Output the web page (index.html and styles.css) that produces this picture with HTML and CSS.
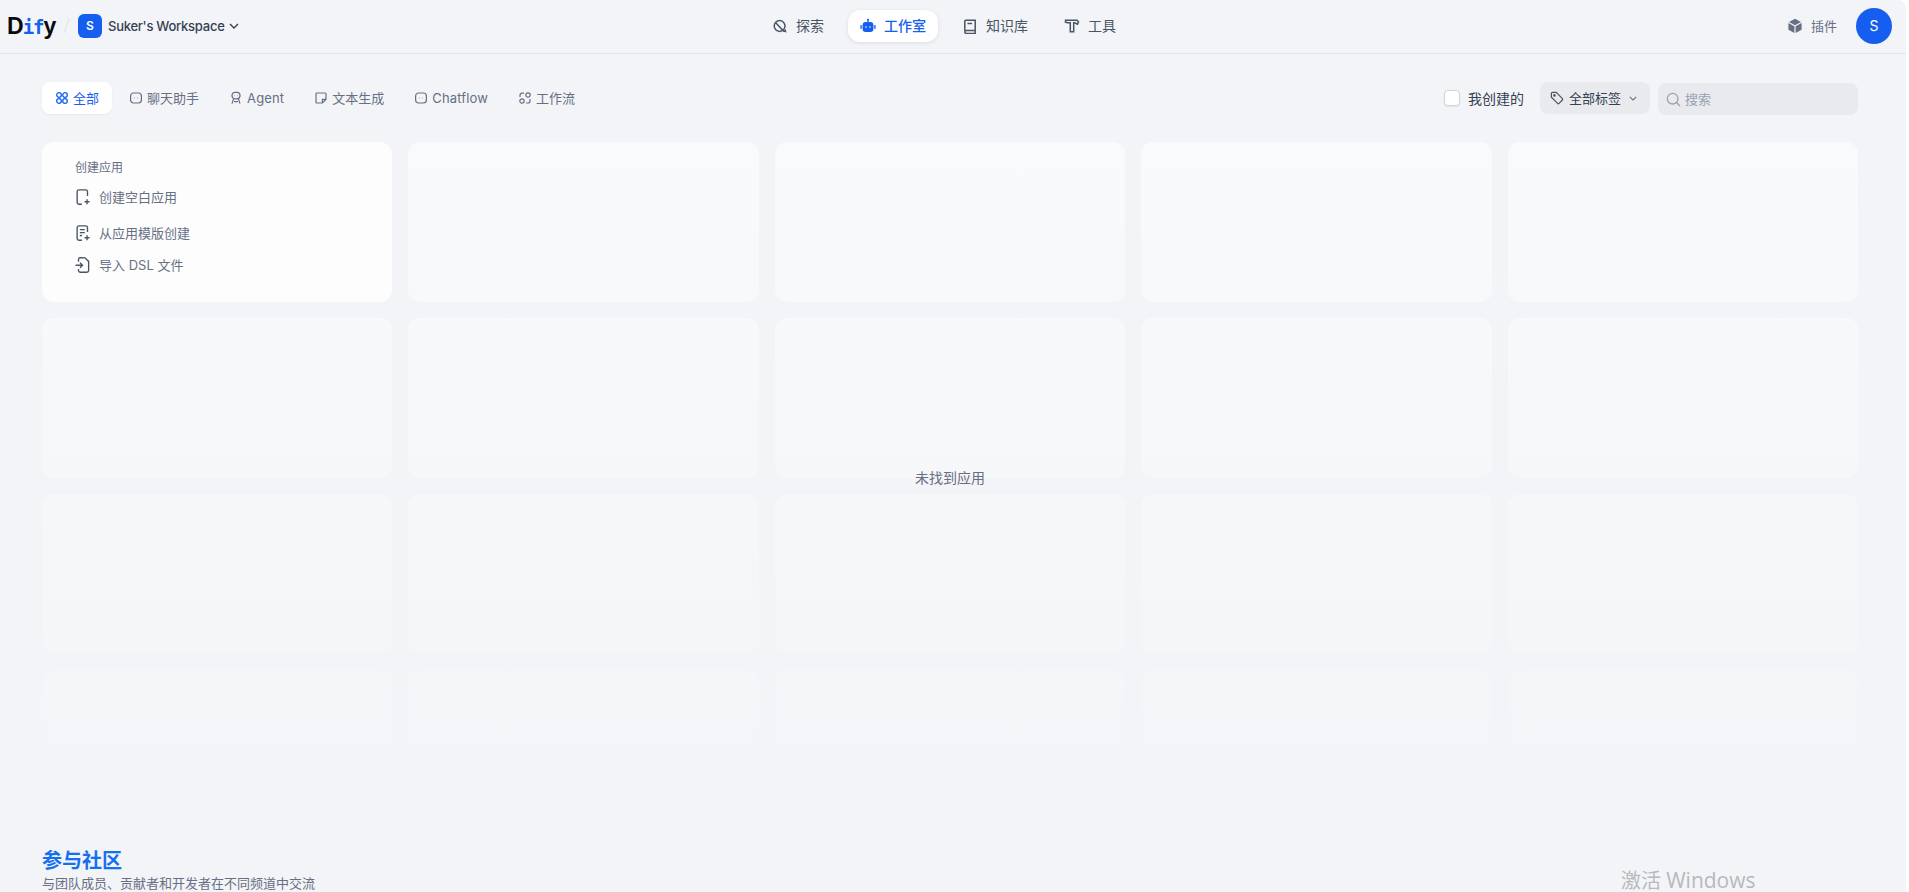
FILE: index.html
```html
<!DOCTYPE html>
<html lang="zh-CN">
<head>
    <meta charset="UTF-8">
    <meta name="viewport" content="width=device-width, initial-scale=1.0">
    <title>Dify</title>
    <link rel="stylesheet" href="styles.css">
</head>
<body>
<div class="window">

    <header class="topbar">
        <div class="topbar-left">
            <div class="logo">D<span class="logo-blue">if</span>y</div>
            <span class="slash"></span>
            <div class="ws-badge">S</div>
            <div class="ws-name">Suker's Workspace</div>
            <svg class="ws-chevron" viewBox="0 0 10 6" width="10" height="6"><path d="M1 1l4 4 4-4" fill="none" stroke="#354052" stroke-width="1.4"/></svg>
        </div>
        <nav class="mainnav">
            <a class="nav-item">
                <svg viewBox="0 0 16 16" width="16" height="16" fill="none" stroke="#495464" stroke-width="1.5"><circle cx="7.6" cy="8" r="5.4"/><path d="M3.5 4.5l8 8.5 2 .5-.5-2"/></svg>
                <span class="zh">探索</span>
            </a>
            <a class="nav-item active">
                <svg viewBox="0 0 16 16" width="16" height="16" fill="#155eef"><circle cx="8" cy="1.8" r="1.1"/><rect x="7.4" y="2" width="1.2" height="2.4"/><rect x="2.6" y="4" width="10.8" height="10" rx="3"/><rect x=".4" y="7" width="1.4" height="4" rx=".7"/><rect x="14.2" y="7" width="1.4" height="4" rx=".7"/><circle cx="6" cy="9" r=".8" fill="#fff"/><circle cx="10" cy="9" r=".8" fill="#fff"/></svg>
                <span class="zh">工作室</span>
            </a>
            <a class="nav-item">
                <svg viewBox="0 0 16 16" width="16" height="16" fill="none" stroke="#495464" stroke-width="1.5"><path d="M2.8 12.5V3.2c0-.6.5-1 1-1h9.400v10.300H4.300a1.500 1.500 0 0 0 0 3h8.900v-3"/><path d="M5.500 5.500h4.500"/></svg>
                <span class="zh">知识库</span>
            </a>
            <a class="nav-item">
                <svg viewBox="0 0 16 16" width="16" height="16" fill="none" stroke="#495464" stroke-width="1.5"><path d="M1.500 2.200h11.500l1.500 1.600-1 2.400-3-1.400H9.700v9H6.300v-9H3.500L1.500 4.200z"/></svg>
                <span class="zh">工具</span>
            </a>
        </nav>
        <div class="topbar-right">
            <a class="plugin-link">
                <svg viewBox="0 0 16 16" width="16" height="16" fill="#676f83"><path d="M8 .8l6 3.200L8 7.200 2 4z"/><path d="M1.400 5l6 3.200V15l-6-3.200z"/><path d="M14.600 5l-6 3.200V15l6-3.200z"/></svg>
                <span class="zh">插件</span>
            </a>
            <div class="avatar">S</div>
        </div>
    </header>

    <main class="content">
        <div class="toolbar">
            <div class="tabs">
                <a class="tab active">
                    <svg viewBox="0 0 14 14" width="14" height="14" fill="none" stroke="currentColor" stroke-width="1.3"><circle cx="4" cy="4" r="2.3"/><circle cx="10" cy="4" r="2.3"/><circle cx="4" cy="10" r="2.3"/><circle cx="10" cy="10" r="2.3"/></svg>
                    <span class="zh">全部</span>
                </a>
                <a class="tab">
                    <svg viewBox="0 0 14 14" width="14" height="14" fill="none" stroke="currentColor" stroke-width="1.2"><rect x="1.600" y="2" width="10.800" height="10" rx="3"/><path d="M5.200 7h.6M8.200 7h.6"/></svg>
                    <span class="zh">聊天助手</span>
                </a>
                <a class="tab">
                    <svg viewBox="0 0 14 14" width="14" height="14" fill="none" stroke="currentColor" stroke-width="1.2"><rect x="3" y="1.400" width="8" height="6.400" rx="3"/><path d="M5.600 4.600h.4M8 4.600h.4M4.600 7.800L3 12.600M9.400 7.800l1.600 4.800M5 10.600h4"/></svg>
                    <span class="tab-en">Agent</span>
                </a>
                <a class="tab">
                    <svg viewBox="0 0 14 14" width="14" height="14" fill="none" stroke="currentColor" stroke-width="1.2"><path d="M2 3c0-.6.4-1 1-1h8c.6 0 1 .4 1 1v5.400L8.400 12H3c-.6 0-1-.4-1-1z"/><path d="M12 8.400H8.400V12"/></svg>
                    <span class="zh">文本生成</span>
                </a>
                <a class="tab">
                    <svg viewBox="0 0 14 14" width="14" height="14" fill="none" stroke="currentColor" stroke-width="1.2"><rect x="1.600" y="2" width="10.800" height="10" rx="3"/><path d="M5.200 7h.6M8.200 7h.6"/></svg>
                    <span class="tab-en">Chatflow</span>
                </a>
                <a class="tab">
                    <svg viewBox="0 0 14 14" width="14" height="14" fill="none" stroke="currentColor" stroke-width="1.2"><path d="M6 2.200H4a2 2 0 0 0-2 2V6"/><circle cx="10" cy="4" r="2.200"/><circle cx="4" cy="10" r="2.200"/><path d="M8 12h2a2 2 0 0 0 2-2V8"/></svg>
                    <span class="zh">工作流</span>
                </a>
            </div>
            <div class="filters">
                <label class="mine"><span class="checkbox"></span>我创建的</label>
                <div class="tag-filter">
                    <svg viewBox="0 0 14 14" width="14" height="14" fill="none" stroke="#495464" stroke-width="1.2"><path d="M1.400 2.400c0-.6.4-1 1-1h3.800l6.200 6.200c.4.4.4 1 0 1.400l-3.400 3.400c-.4.4-1 .4-1.400 0L1.400 6.200z"/><circle cx="4.400" cy="4.400" r=".7"/></svg>
                    <span class="zh">全部标签</span>
                    <svg class="tag-chevron" viewBox="0 0 8 5" width="8" height="5"><path d="M.8.8L4 4 7.200.8" fill="none" stroke="#676f83" stroke-width="1.1"/></svg>
                </div>
                <div class="search">
                    <svg viewBox="0 0 14 14" width="15" height="15" fill="none" stroke="#98a2b2" stroke-width="1.2"><circle cx="6.200" cy="6.200" r="5"/><path d="M10 10l3 3"/></svg>
                    <span class="zh">搜索</span>
                </div>
            </div>
        </div>

        <div class="grid">
            <div class="card create-card">
                <div class="create-title">创建应用</div>
                <a class="create-row row-blank">
                    <svg viewBox="0 0 16 16" width="18" height="18" fill="none" stroke="#495464" stroke-width="1.2"><path d="M7 14.400H4.400c-1 0-1.600-.7-1.600-1.600V3.200c0-1 .7-1.600 1.600-1.600h6c1 0 1.600.7 1.600 1.600v4"/><path d="M11.600 10v4.400M9.400 12.200h4.400"/></svg>
                    <span class="zh">创建空白应用</span>
                </a>
                <a class="create-row row-template">
                    <svg viewBox="0 0 16 16" width="18" height="18" fill="none" stroke="#495464" stroke-width="1.2"><path d="M7 14.400H4.400c-1 0-1.600-.7-1.600-1.600V3.200c0-1 .7-1.600 1.600-1.600h6c1 0 1.600.7 1.600 1.600v4"/><path d="M5.200 5h4.400M5.200 7.600h4.400M5.200 10.200h2"/><path d="M11.600 10v4.400M9.400 12.200h4.400"/></svg>
                    <span class="zh">从应用模版创建</span>
                </a>
                <a class="create-row row-import">
                    <svg viewBox="0 0 16 16" width="18" height="18" fill="none" stroke="#495464" stroke-width="1.2"><path d="M4 5V3.200c0-1 .7-1.600 1.600-1.600h4.200l3.200 3.200v8c0 1-.7 1.600-1.600 1.600H5.600C4.700 14.400 4 13.700 4 12.800V11.500"/><path d="M1.400 8.200h6.200M5.400 6l2.200 2.200-2.200 2.200"/></svg>
                    <span class="zh">导入 DSL 文件</span>
                </a>
            </div>
            <div class="card"></div><div class="card"></div><div class="card"></div><div class="card"></div>
            <div class="card"></div><div class="card"></div><div class="card"></div><div class="card"></div><div class="card"></div>
            <div class="card"></div><div class="card"></div><div class="card"></div><div class="card"></div><div class="card"></div>
            <div class="card"></div><div class="card"></div><div class="card"></div><div class="card"></div><div class="card"></div>
            <div class="grid-fade"></div>
            <div class="no-apps">未找到应用</div>
        </div>

        <footer class="community">
            <h3>参与社区</h3>
            <p>与团队成员、贡献者和开发者在不同频道中交流</p>
        </footer>
    </main>

</div>
<div class="activate">激活 <span class="activate-en">Windows</span></div>
</body>
</html>
```

FILE: styles.css
```css
* {
    box-sizing: border-box;
}
html, body {
    height: 100%;
}
body {
    margin: 0;
    background-color: #fff;
    font-family: Inter, "Noto Sans CJK SC", sans-serif;
    font-size: 13px;
    color: #495464;
    overflow: hidden;
}
.window {
    width: 1906px;
    height: 892px;
    background-color: #f2f4f7;
    border-top-right-radius: 8px;
    overflow: hidden;
}
.zh {
    margin-bottom: 2px; /* CJK glyphs sit low otherwise */
}

/* top bar */
.topbar {
    display: flex;
    align-items: center;
    height: 54px;
    padding-bottom: 1px;
    border-bottom: 1px solid #e2e4e9;
}
.topbar-left {
    display: flex;
    align-items: center;
    width: 760px;
    padding-left: 7px;
}
.logo {
    width: 49px;
    font-family: "Liberation Sans", sans-serif;
    font-size: 23px;
    font-weight: 700;
    letter-spacing: -1px;
    color: #0a0a0a;
}
.logo-blue {
    font-family: "DejaVu Sans Mono", monospace;
    font-size: 19px;
    color: #155eef;
}
.slash {
    width: 1px;
    height: 16px;
    margin: 0 11px 0 10px;
    background-color: #dfe2e8;
    transform: rotate(20deg);
}
.ws-badge {
    width: 24px;
    height: 24px;
    line-height: 24px;
    border-radius: 6px;
    background-color: #155eef;
    color: #fff;
    font-size: 12px;
    font-weight: 600;
    text-align: center;
}
.ws-name {
    margin-left: 6px;
    font-size: 13px;
    font-weight: 500;
    letter-spacing: -0.25px;
    color: #354052;
}
.ws-chevron {
    margin-left: 4px;
}
.mainnav {
    display: flex;
    gap: 12px;
}
.nav-item {
    display: flex;
    align-items: center;
    gap: 8px;
    height: 32px;
    padding: 0 12px;
    border-radius: 12px;
    font-size: 14px;
    color: #495464;
}
.nav-item.active {
    background-color: #fff;
    box-shadow: 0 1px 4px rgba(16, 24, 40, 0.1);
    color: #155eef;
    font-weight: 500;
}
.topbar-right {
    flex: 1;
    display: flex;
    justify-content: flex-end;
    align-items: center;
    padding-right: 14px;
}
.plugin-link {
    display: flex;
    align-items: center;
    gap: 8px;
    margin-right: 19px;
    color: #676f83;
}
.avatar {
    width: 36px;
    height: 36px;
    line-height: 36px;
    border-radius: 50%;
    background-color: #155eef;
    color: #fff;
    font-size: 14px;
    text-align: center;
}

/* page content */
.content {
    padding: 28px 48px 0 42px;
}
.toolbar {
    display: flex;
    justify-content: space-between;
    align-items: center;
    height: 32px;
}
.tabs {
    display: flex;
    gap: 4px;
}
.tab {
    display: flex;
    align-items: center;
    gap: 4px;
    height: 32px;
    padding: 0 13px;
    border-radius: 8px;
    color: #676f83;
}
.tab-en {
    letter-spacing: 0.15px;
}
.tab.active {
    background-color: #fff;
    box-shadow: 0 1px 2px rgba(16, 24, 40, 0.05);
    color: #155eef;
}
.filters {
    display: flex;
    align-items: center;
}
.mine {
    display: flex;
    align-items: center;
    gap: 8px;
    margin-right: 16px;
    font-size: 14px;
    color: #354052;
}
.checkbox {
    width: 16px;
    height: 16px;
    border: 1px solid #d0d5dc;
    border-radius: 4px;
    background-color: #fff;
    box-shadow: 0 1px 2px rgba(16, 24, 40, 0.08);
}
.tag-filter {
    display: flex;
    align-items: center;
    gap: 5px;
    width: 110px;
    height: 32px;
    padding-left: 10px;
    margin-right: 8px;
    border-radius: 8px;
    background-color: #e8eaee;
    color: #354052;
}
.tag-chevron {
    margin-left: 3px;
}
.search {
    display: flex;
    align-items: center;
    gap: 4px;
    width: 200px;
    height: 32px;
    padding-left: 8px;
    margin-top: 2px;
    border-radius: 8px;
    background-color: #e8eaee;
    color: #98a2b2;
}

/* card grid */
.grid {
    position: relative;
    display: grid;
    grid-template-columns: repeat(5, 1fr);
    gap: 16px;
    margin-top: 28px;
}
.card {
    height: 160px;
    border-radius: 12px;
    background-color: #f9fafb;
}
.create-card {
    position: relative;
    z-index: 1;
    background-color: #fdfdfe;
    padding: 17px 0 0 33px;
}
.create-title {
    font-size: 12px;
    line-height: 18px;
    color: #676f83;
}
.create-row {
    display: flex;
    align-items: center;
    gap: 7px;
    height: 20px;
    margin-left: -1px;
    color: #676f83;
}
.row-blank {
    margin-top: 10px;
}
.row-template {
    margin-top: 16px;
}
.row-import {
    margin-top: 12px;
}
.grid-fade {
    position: absolute;
    inset: 0;
    background: linear-gradient(to bottom, rgba(242, 244, 247, 0), #f2f4f7);
}
.no-apps {
    position: absolute;
    left: 0;
    right: 0;
    top: 327px;
    font-size: 14px;
    line-height: 18px;
    text-align: center;
    color: #676f83;
}
.community {
    margin-top: 18px;
}
.community h3 {
    margin: 0;
    font-size: 20px;
    line-height: 26px;
    font-weight: 700;
    color: #1570ef;
}
.community p {
    margin: 0;
    line-height: 18px;
    color: #676f83;
}

.activate {
    position: absolute;
    left: 1621px;
    top: 869px;
    font-size: 20px;
    line-height: 22px;
    color: #b8b9bc;
    font-family: "Open Sans", "Noto Sans CJK SC", sans-serif;
}
.activate-en {
    font-size: 21px;
}
```
